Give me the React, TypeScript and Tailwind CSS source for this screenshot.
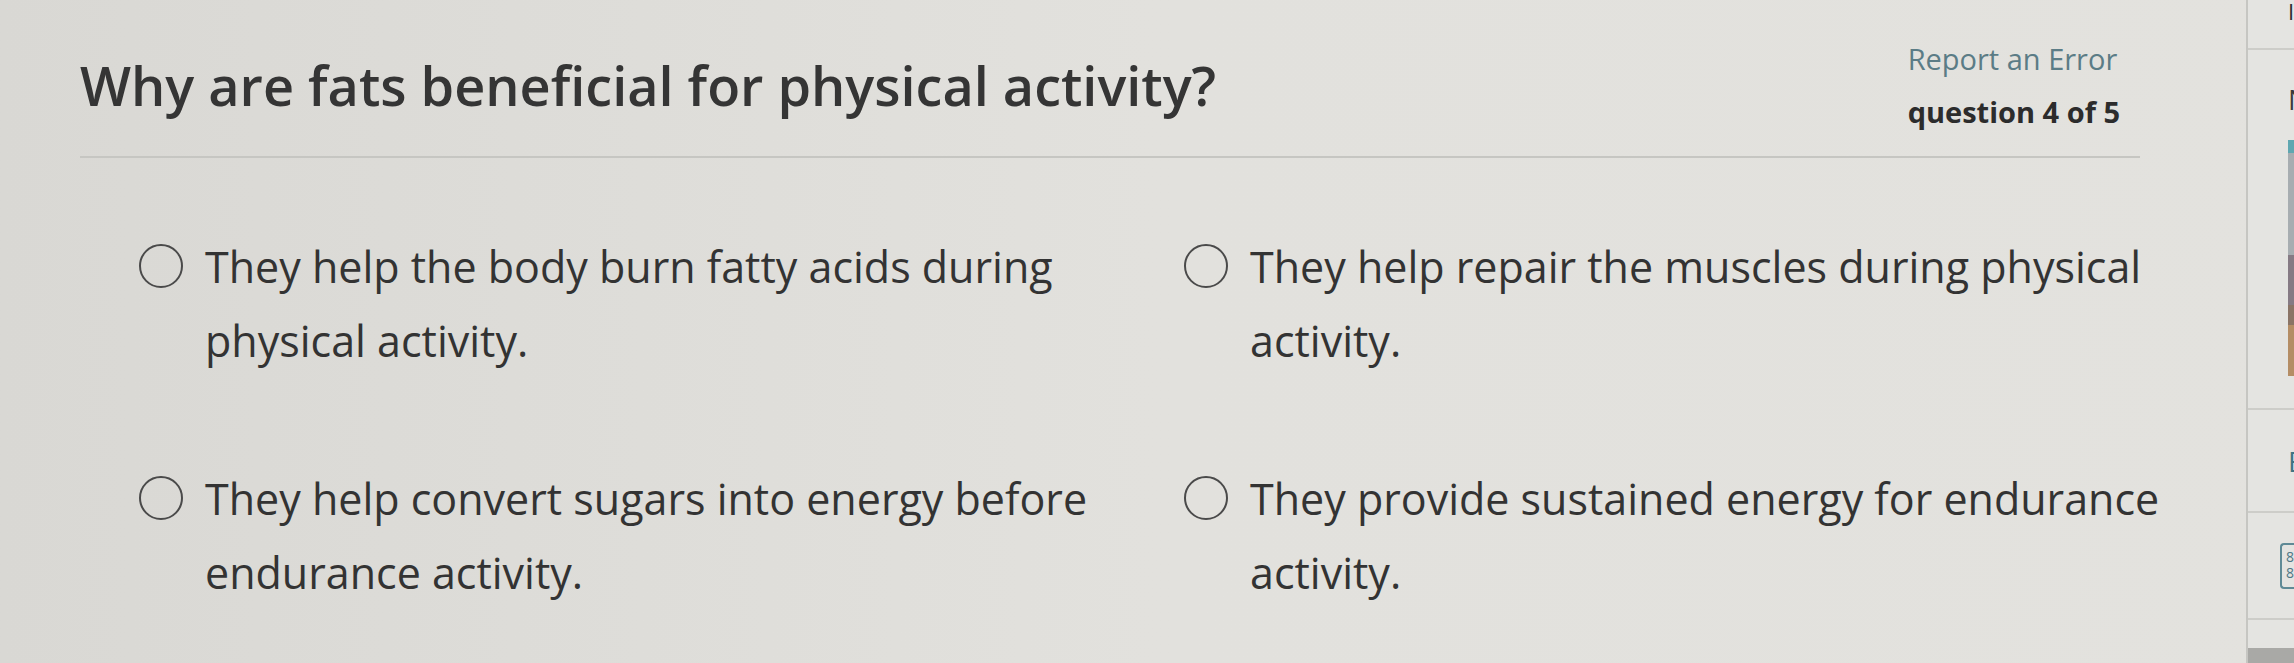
import React from 'react';

const options = [
  'They help the body burn fatty acids during physical activity.',
  'They help repair the muscles during physical activity.',
  'They help convert sugars into energy before endurance activity.',
  'They provide sustained energy for endurance activity.',
];

const Radio: React.FC = () => (
  <span className="mt-[14px] block h-[44px] w-[44px] shrink-0 rounded-full border-[2.5px] border-[#4a4a4a]" />
);

const Sidebar: React.FC = () => (
  <aside className="flex w-[48px] shrink-0 flex-col border-l-2 border-[#c6c6c2] bg-[#e4e4e1] text-[#2f2f2f]">
    <div className="h-[50px] border-b-2 border-[#cdcdc9] pl-[40px] text-[22px] leading-none">I</div>
    <div className="flex h-[360px] flex-col border-b-2 border-[#cdcdc9] pl-[40px]">
      <span className="mt-[38px] text-[28px] leading-[22px] text-[#3a3a3a]">N</span>
      <div className="mt-[30px] flex h-[236px] w-[10px] flex-col overflow-hidden">
        <div className="h-[13px] bg-[#5fa7b1]" />
        <div className="h-[102px] bg-[#a7adb1]" />
        <div className="h-[50px] bg-[#857a84]" />
        <div className="h-[20px] bg-[#8a7466]" />
        <div className="flex-1 bg-[#b48d65]" />
      </div>
    </div>
    <div className="flex h-[103px] items-center border-b-2 border-[#cdcdc9] pl-[40px] text-[28px] text-[#3f7484]">E</div>
    <div className="flex h-[107px] items-center border-b-2 border-[#cdcdc9] pl-[32px]">
      <span className="flex h-[46px] w-[16px] flex-col items-end overflow-hidden rounded-l-[4px] border-2 border-r-0 border-[#5f8a96] pt-[4px] text-[14px] leading-[16px] text-[#4e7785]">
        <span>8</span>
        <span>8</span>
      </span>
    </div>
    <div className="h-[28px]" />
    <div className="flex-1 bg-[#a9a9a6]" />
  </aside>
);

export default function App() {
  return (
    <div
      className="flex h-[663px] w-[2294px] overflow-hidden bg-gradient-to-r from-[#d9d8d4] via-[#e2e1dd] to-[#e3e2de] text-[#303030]"
      style={{ fontFamily: '"Open Sans", "Noto Sans", sans-serif' }}
    >
      <main className="flex-1 pl-[80px]">
        <header className="mr-[106px] flex h-[158px] items-center justify-between border-b-2 border-[#c6c6c2] pt-[14px]">
          <h1 className="text-[54px] font-semibold text-[#353535]">
            Why are fats beneficial for physical activity?
          </h1>
          <div className="mr-[20px] flex flex-col gap-[15px] text-[29px] leading-[38px]">
            <span className="text-[#5b7c86]">Report an Error</span>
            <span className="font-bold text-[#2c2c2c]">question 4 of 5</span>
          </div>
        </header>

        <section className="ml-[59px] mt-[72px] grid grid-cols-[1045px_1fr] gap-y-[84px]">
          {options.map((o) => (
            <label key={o} className="flex items-start gap-[22px]">
              <Radio />
              <span className="max-w-[940px] text-[43px] leading-[74px] text-[#333333]">{o}</span>
            </label>
          ))}
        </section>
      </main>
      <Sidebar />
    </div>
  );
}
